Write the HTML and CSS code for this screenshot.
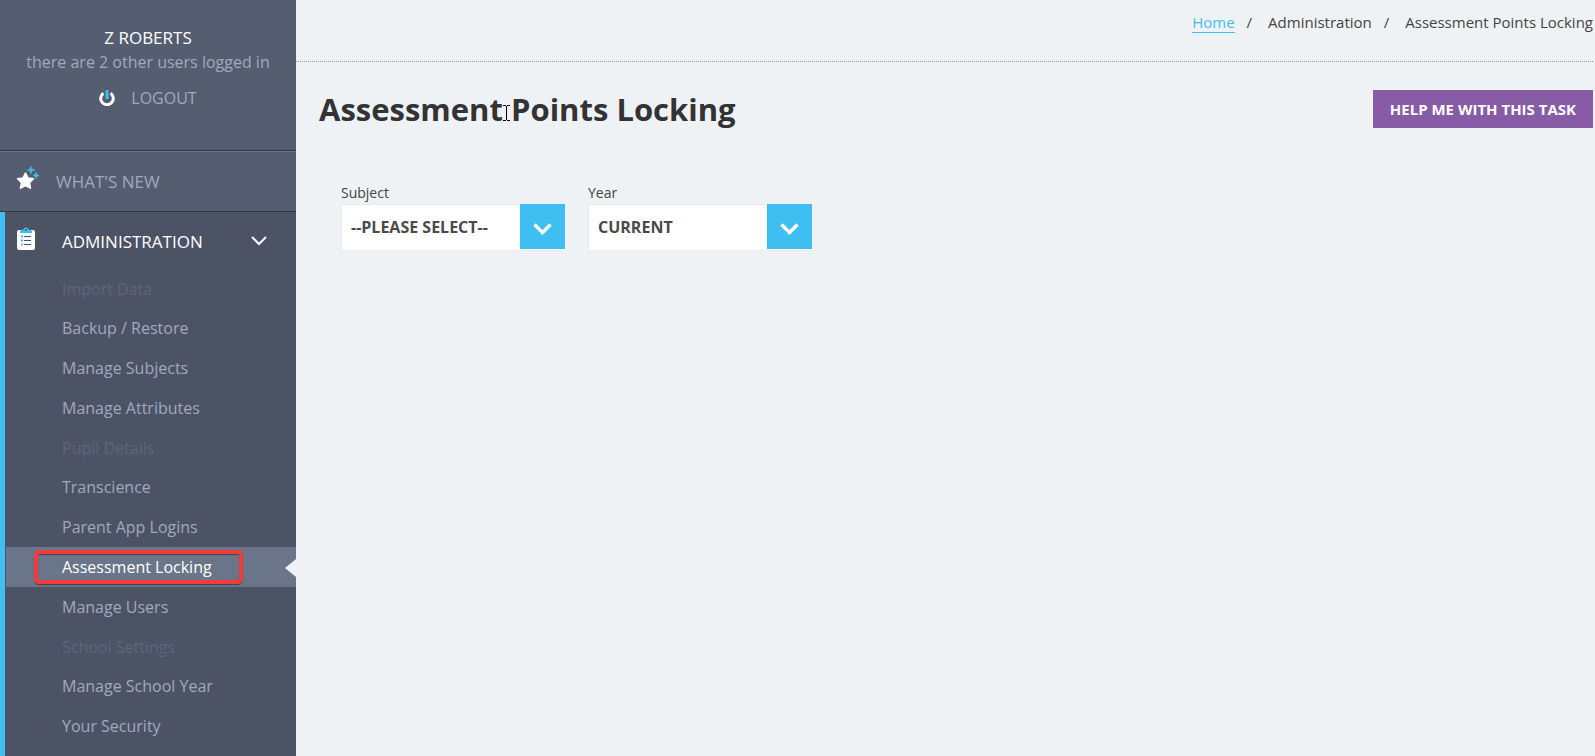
FILE: index.html
```
<!DOCTYPE html>
<html lang="en">

<head>
    <meta charset="UTF-8">
    <meta name="viewport" content="width=device-width, initial-scale=1.0">
    <title>Assessment Points Locking</title>
    <link rel="stylesheet" href="styles.css">
</head>

<body>

    <aside class="sidebar">
        <div class="user">
            <p class="user-name">Z ROBERTS</p>
            <p>there are 2 other users logged in</p>
            <a href="#" class="logout">
                <svg width="16" height="16" viewBox="0 0 16 16" fill="none">
                    <path d="M4.4 3.2A6.3 6.3 0 1 0 11.6 3.2" stroke="#fff" stroke-width="3" />
                    <path d="M8 0V9" stroke="#3fbef1" stroke-width="3" />
                </svg>
                LOGOUT
            </a>
        </div>

        <!-- menu -->
        <nav class="menu">
            <a href="#" class="whats-new">
                <svg width="24" height="24" viewBox="0 0 24 24">
                    <path d="M9.500 7l2.500 4.900 5.500.8-4 3.900 1 5.600-5-2.600-5 2.600 1-5.600-4-3.900 5.500-.8z" fill="#fff" stroke="#fff" stroke-width="1.500" stroke-linejoin="round" />
                    <path d="M15 0l1.100 2.900L19 4l-2.900 1.100L15 8l-1.100-2.900L11 4l2.900-1.100zM20 6l.9 2.100L23 9.500l-2.100.9L20 13l-.9-2.600-2.100-.9 2.100-1.400z" fill="#3fbef1" stroke="#3fbef1" stroke-width=".4" />
                </svg>
                WHAT'S NEW
            </a>

            <div class="admin">
                <button type="button" class="admin-title">
                    <svg class="clipboard" width="18" height="24" viewBox="0 0 18 24">
                        <rect x="0" y="3" width="18" height="20" rx="2" fill="#fff" />
                        <path d="M3 6V4l2.500-1.500h1a2.600 2.600 0 0 1 5 0h1L15 4v2z" fill="#3fbef1" />
                        <circle cx="9" cy="3" r="1" fill="#4c5365" />
                        <path d="M4 9.500h2M4 13.500h2M4 17.500h2" stroke="#3fbef1" stroke-width="2" />
                        <path d="M7 9.500h7M7 13.500h7M7 17.500h7" stroke="#4c5365" stroke-width="1" />
                    </svg>
                    <span>ADMINISTRATION</span>
                    <svg width="16" height="10" viewBox="0 0 16 10" fill="none">
                        <path d="M1 1l7 7 7-7" stroke="#fff" stroke-width="2" />
                    </svg>
                </button>
                <ul class="submenu">
                    <li class="disabled">Import Data</li>
                    <li><a href="#">Backup / Restore</a></li>
                    <li><a href="#">Manage Subjects</a></li>
                    <li><a href="#">Manage Attributes</a></li>
                    <li class="disabled">Pupil Details</li>
                    <li><a href="#">Transcience</a></li>
                    <li><a href="#">Parent App Logins</a></li>
                    <li class="active"><a href="#">Assessment Locking</a></li>
                    <li><a href="#">Manage Users</a></li>
                    <li class="disabled">School Settings</li>
                    <li><a href="#">Manage School Year</a></li>
                    <li><a href="#">Your Security</a></li>
                </ul>
            </div>
        </nav>
    </aside>

    <main class="content">
        <nav class="breadcrumb">
            <a href="#">Home</a>
            <span class="slash">/</span>
            <span>Administration</span>
            <span class="slash">/</span>
            <span>Assessment Points Locking</span>
        </nav>

        <div class="heading">
            <h1>Assessment Points Locking
                <svg class="text-cursor" width="7" height="16" viewBox="0 0 7 16" fill="none">
                    <path d="M0 .5h3M4 .5h3M3.500 1v14M0 15.500h3M4 15.500h3" stroke="#000" />
                </svg>
            </h1>
            <button type="button" class="help">HELP ME WITH THIS TASK</button>
        </div>

        <form class="filters">
            <div class="field">
                <label for="subject">Subject</label>
                <div class="select">
                    <select id="subject">
                        <option>--PLEASE SELECT--</option>
                    </select>
                    <svg class="arrow" viewBox="0 0 45 45" fill="none">
                        <path d="M14.500 20.500l8 8 8-8" stroke="#fff" stroke-width="3.400" />
                    </svg>
                </div>
            </div>
            <div class="field">
                <label for="year">Year</label>
                <div class="select">
                    <select id="year">
                        <option>CURRENT</option>
                    </select>
                    <svg class="arrow" viewBox="0 0 45 45" fill="none">
                        <path d="M14.500 20.500l8 8 8-8" stroke="#fff" stroke-width="3.400" />
                    </svg>
                </div>
            </div>
        </form>
    </main>

</body>

</html>
```
FILE: styles.css
```
*,
*::before {
    margin: 0;
    padding: 0;
    box-sizing: border-box;
}

body {
    display: flex;
    min-height: 100vh;
    background-color: #eef2f5;
    color: #333;
    font-family: "Open Sans", sans-serif;
    font-size: 16px;
    line-height: 24px;
}

a {
    color: inherit;
    text-decoration: none;
}

button {
    border: none;
    font-family: inherit;
    cursor: pointer;
}

/* sidebar */
.sidebar {
    width: 296px;
    flex-shrink: 0;
    display: flex;
    flex-direction: column;
    background-color: #555d70;
    color: #a0a9c0;
}

.user {
    height: 151px;
    padding-top: 26px;
    text-align: center;
    border-bottom: 1px solid #2d3a4b;
}

.user-name {
    color: white;
    font-size: 17px;
}

.logout {
    display: flex;
    justify-content: center;
    align-items: center;
    gap: 16px;
    margin-top: 12px;
}

.menu {
    flex: 1;
    display: flex;
    flex-direction: column;
}

.whats-new {
    height: 61px;
    display: flex;
    align-items: center;
    gap: 16px;
    padding-left: 16px;
    border-top: 1px solid #6b7589;
    border-bottom: 1px solid #2d3a4b;
    font-size: 17px;
}

.whats-new svg {
    margin-bottom: 8px;
}

.admin {
    flex: 1;
    background-color: #4c5365;
    border-left: 5px solid #3fbef1;
}

.admin-title {
    width: 100%;
    height: 57px;
    display: flex;
    align-items: center;
    padding: 0 29px 0 12px;
    background: none;
    color: white;
    font-size: 17px;
    text-align: left;
}

.clipboard {
    margin-bottom: 4px;
}

.admin-title span {
    flex: 1;
    margin-top: 2px;
    padding-left: 27px;
}

.submenu {
    list-style: none;
}

.submenu li {
    line-height: 40px;
    padding-left: 57px;
}

.submenu .disabled {
    height: 39px;
    color: #5e657a;
}

.submenu .active {
    position: relative;
    margin-left: 1px;
    padding-left: 56px;
    background-color: #6b7589;
    color: white;
}

/* red marker round the current page */
.active::before {
    content: "";
    position: absolute;
    top: 3px;
    left: 28px;
    width: 209px;
    height: 34px;
    border: 4px solid #f23c3c;
    border-radius: 5px;
    box-shadow: 0 1px 1px #3b4253, inset 0 1px 1px #3b4253;
}

.active::after {
    content: "";
    position: absolute;
    top: 12px;
    right: 0;
    border: 9px solid transparent;
    border-left: none;
    border-right: 11px solid #eef2f5;
}

/* page */
.content {
    flex: 1;
    padding-right: 2px;
}

.breadcrumb {
    height: 62px;
    display: flex;
    justify-content: flex-end;
    align-items: flex-start;
    padding-top: 12px;
    border-bottom: 1px dotted #999;
    color: #444;
    font-size: 15px;
    line-height: 20px;
}

.breadcrumb a {
    color: #3fbef1;
    border-bottom: 1px solid #3fbef1;
}

.slash {
    margin: 0 16px 0 12px;
}

.heading {
    display: flex;
    justify-content: space-between;
    align-items: center;
    margin-top: 25px;
    padding-left: 23px;
}

h1 {
    position: relative;
    font-size: 31px;
    font-weight: 700;
    line-height: 44px;
}

.text-cursor {
    position: absolute;
    top: 18px;
    left: 184px;
}

.help {
    height: 38px;
    padding: 0 17px;
    background-color: #875ba5;
    color: white;
    font-size: 15px;
    font-weight: 700;
}

.filters {
    display: flex;
    gap: 23px;
    margin-top: 51px;
    padding-left: 45px;
}

.field label {
    display: block;
    color: #444;
    font-size: 14px;
    line-height: 22px;
}

.select {
    position: relative;
}

.select select {
    display: block;
    width: 224px;
    height: 47px;
    padding: 0 55px 2px 9px;
    appearance: none;
    background-color: white;
    border: 1px solid #ebebeb;
    border-radius: 0;
    color: #4a4a4a;
    font-family: inherit;
    font-size: 16px;
    font-weight: 700;
}

.arrow {
    position: absolute;
    top: 0;
    right: 0;
    width: 45px;
    height: 45px;
    background-color: #3fbef1;
    pointer-events: none;
}
```
